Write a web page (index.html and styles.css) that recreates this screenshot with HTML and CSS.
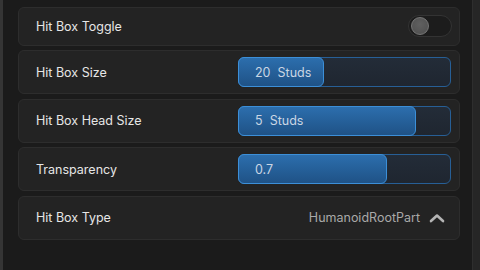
FILE: index.html
```html
<!DOCTYPE html>
<html lang="en">
<head>
    <meta charset="UTF-8">
    <meta name="viewport" content="width=device-width, initial-scale=1.0">
    <title>Hit Box Settings</title>
    <link rel="stylesheet" href="styles.css">
</head>
<body>
    <div class="frame">
        <div class="edge"></div>
        <main class="list">
            <div class="row row-toggle">
                <span class="label">Hit Box Toggle</span>
                <div class="toggle"><span class="knob"></span></div>
            </div>
            <div class="row">
                <span class="label">Hit Box Size</span>
                <div class="slider">
                    <div class="fill" style="width: 86px"><span>20&nbsp; Studs</span></div>
                </div>
            </div>
            <div class="row">
                <span class="label">Hit Box Head Size</span>
                <div class="slider">
                    <div class="fill" style="width: 178px"><span>5&nbsp; Studs</span></div>
                </div>
            </div>
            <div class="row">
                <span class="label">Transparency</span>
                <div class="slider">
                    <div class="fill" style="width: 149px"><span>0.7</span></div>
                </div>
            </div>
            <div class="row">
                <span class="label">Hit Box Type</span>
                <div class="dropdown">
                    <span class="value">HumanoidRootPart</span>
                    <svg class="chevron" width="16" height="10" viewBox="0 0 16 10">
                        <path d="M2 8 L8 2.5 L14 8" fill="none" stroke="#b4b4b4" stroke-width="2.6" stroke-linecap="round" stroke-linejoin="round"/>
                    </svg>
                </div>
            </div>
        </main>
        <div class="scrollbar"></div>
    </div>
</body>
</html>
```
FILE: styles.css
```css
body {
    margin: 0;
    padding: 0;
    background: #1b1b1b;
    font-family: Inter, "Open Sans", sans-serif;
    color: #e8e8e8;
}

.frame {
    display: flex;
    width: 480px;
    height: 270px;
    overflow: hidden;
}

.edge {
    width: 3px;
    flex-shrink: 0;
    background: #353535;
}

.list {
    width: 442px;
    flex-shrink: 0;
    padding: 7px 0 0 15px;
    display: flex;
    flex-direction: column;
    gap: 4.5px;
}

.scrollbar {
    width: 8px;
    flex-shrink: 0;
    margin-left: 12px;
    background: #262626;
    border-left: 1px solid #2e2e2e;
}

.row {
    box-sizing: border-box;
    height: 44px;
    display: flex;
    align-items: center;
    justify-content: space-between;
    padding: 0 8px 0 17px;
    background: #232323;
    border: 1px solid #2d2d2d;
    border-radius: 6px;
}

.row-toggle {
    height: 38.5px;
    padding-right: 7px;
}

.label {
    font-size: 12.5px;
    font-weight: 400;
    color: #e6e6e6;
}

.toggle {
    width: 44px;
    height: 22px;
    box-sizing: border-box;
    border: 1px solid #333;
    border-radius: 11px;
    background: #1c1c1c;
    display: flex;
    align-items: center;
    padding-left: 2px;
}

.knob {
    width: 18px;
    height: 18px;
    border-radius: 50%;
    background: radial-gradient(circle at 50% 40%, #606060, #4e4e4e);
    border: 1px solid #777;
    box-sizing: border-box;
}

.slider {
    width: 213px;
    height: 30px;
    box-sizing: border-box;
    border: 1px solid #275f96;
    border-radius: 6px;
    background: linear-gradient(#232c38, #1f2630);
    display: flex;
}

.fill {
    height: 30px;
    margin: -1px 0 0 -1px;
    box-sizing: border-box;
    border: 1px solid #3c8fd8;
    border-radius: 6px;
    background: linear-gradient(#2c6ead, #1f5286);
    display: flex;
    align-items: center;
    padding-left: 16px;
    font-size: 12.5px;
    color: #c9d6e4;
    white-space: nowrap;
}

.dropdown {
    display: flex;
    align-items: center;
    gap: 9px;
    padding-right: 6px;
}

.value {
    font-size: 12.5px;
    color: #a9a9a9;
}

.chevron {
    display: block;
}
```
